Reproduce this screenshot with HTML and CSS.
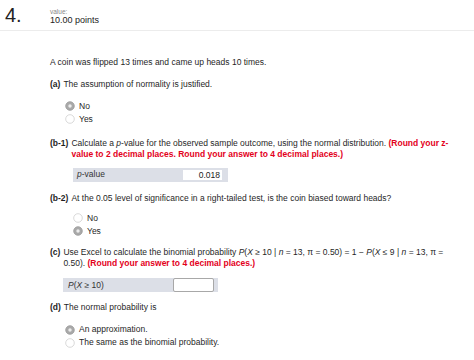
FILE: index.html
```html
<!DOCTYPE html>
<html>
<head>
<meta charset="utf-8">
<link rel="stylesheet" href="styles.css">
</head>
<body>
<div class="header">
  <div class="qnum">4.</div>
  <div class="value">
    <div class="value-label">value:</div>
    <div class="points">10.00 points</div>
  </div>
</div>
<div class="content">
  <p class="intro">A coin was flipped 13 times and came up heads 10 times.</p>

  <div class="part part-a"><span class="tag">(a)</span><span class="txt">The assumption of normality is justified.</span></div>
  <div class="radios r-a">
    <div class="radio"><svg class="rb" width="10" height="10" viewBox="0 0 10 10"><circle cx="5" cy="5" r="4.3" fill="#a9a9a9" stroke="#9a9a9a" stroke-width="0.8"/><circle cx="5" cy="5" r="1.7" fill="#ececec"/></svg><span>No</span></div>
    <div class="radio"><svg class="rb" width="10" height="10" viewBox="0 0 10 10"><circle cx="5" cy="5" r="4.3" fill="#fff" stroke="#cfcfcf" stroke-width="0.8"/></svg><span>Yes</span></div>
  </div>

  <div class="part part-b1"><span class="tag">(b-1)</span><span class="txt">Calculate a <i>p</i>-value for the observed sample outcome, using the normal distribution. <b class="red">(Round your z-value to 2 decimal places. Round your answer to 4 decimal places.)</b></span></div>
  <div class="answer ans-b1">
    <div class="alabel"><i>p</i>-value</div>
    <div class="ainput filled">0.018</div>
  </div>

  <div class="part part-b2"><span class="tag">(b-2)</span><span class="txt">At the 0.05 level of significance in a right-tailed test, is the coin biased toward heads?</span></div>
  <div class="radios r-b2">
    <div class="radio"><svg class="rb" width="10" height="10" viewBox="0 0 10 10"><circle cx="5" cy="5" r="4.3" fill="#fff" stroke="#cfcfcf" stroke-width="0.8"/></svg><span>No</span></div>
    <div class="radio"><svg class="rb" width="10" height="10" viewBox="0 0 10 10"><circle cx="5" cy="5" r="4.3" fill="#a9a9a9" stroke="#9a9a9a" stroke-width="0.8"/><circle cx="5" cy="5" r="1.7" fill="#ececec"/></svg><span>Yes</span></div>
  </div>

  <div class="part part-c"><span class="tag">(c)</span><span class="txt">Use Excel to calculate the binomial probability <i>P</i>(<i>X</i> ≥ 10 | <i>n</i> = 13, π = 0.50) = 1 − <i>P</i>(<i>X</i> ≤ 9 | <i>n</i> = 13, π = 0.50). <b class="red">(Round your answer to 4 decimal places.)</b></span></div>
  <div class="answer ans-c">
    <div class="alabel"><i>P</i>(<i>X</i> ≥ 10)</div>
    <div class="ainput empty"></div>
  </div>

  <div class="part part-d"><span class="tag">(d)</span><span class="txt">The normal probability is</span></div>
  <div class="radios r-d">
    <div class="radio"><svg class="rb" width="10" height="10" viewBox="0 0 10 10"><circle cx="5" cy="5" r="4.3" fill="#a9a9a9" stroke="#9a9a9a" stroke-width="0.8"/><circle cx="5" cy="5" r="1.7" fill="#ececec"/></svg><span>An approximation.</span></div>
    <div class="radio"><svg class="rb" width="10" height="10" viewBox="0 0 10 10"><circle cx="5" cy="5" r="4.3" fill="#fff" stroke="#cfcfcf" stroke-width="0.8"/></svg><span>The same as the binomial probability.</span></div>
  </div>
</div>
</body>
</html>
```

FILE: styles.css
```css
html, body {
  margin: 0;
  padding: 0;
  background: #fff;
}
body {
  font-family: "Liberation Sans", Arial, sans-serif;
  color: #1f1f1f;
  width: 474px;
  height: 360px;
  overflow: hidden;
}
.header {
  display: flex;
  height: 30px;
  border-bottom: 1px solid #ececec;
}
.qnum {
  width: 45px;
  padding-left: 5px;
  font-size: 20px;
  line-height: 20px;
  padding-top: 5px;
  color: #222;
}
.value {
  padding-top: 8px;
}
.value-label {
  font-size: 6.5px;
  line-height: 7px;
  color: #888;
}
.points {
  font-size: 9px;
  line-height: 10px;
  color: #222;
}
.content {
  padding-left: 50px;
  padding-right: 20px;
  font-size: 8.5px;
  line-height: 11px;
}
.intro {
  margin: 26px 0 0 0;
}
.part {
  display: flex;
}
.tag {
  font-weight: bold;
  white-space: nowrap;
  margin-right: 3px;
}
.txt {
  flex: 1;
}
.red {
  color: #e3001b;
}
.part-a { margin-top: 11px; }
.part-b1 { margin-top: 12px; padding-right: 5px; }
.part-b2 { margin-top: 11px; }
.part-c { margin-top: 9px; }
.part-d { margin-top: 9.5px; }

.radios {
  display: flex;
  flex-direction: column;
}
.radio {
  display: flex;
  align-items: center;
  height: 13px;
}
.rb {
  margin-right: 4px;
  flex: none;
}
.r-a { margin-top: 9.5px; padding-left: 15px; }
.r-b2 { margin-top: 8px; padding-left: 23px; }
.r-d { margin-top: 10.5px; padding-left: 15px; }

.answer {
  display: flex;
  align-items: center;
  justify-content: space-between;
  background: #dcdfe7;
  width: 155px;
  box-sizing: border-box;
}
.ans-b1 {
  margin-top: 8.5px;
  margin-left: 23px;
  height: 13.5px;
  padding: 0 6px 0 4px;
}
.ans-c {
  margin-top: 9.5px;
  margin-left: 13px;
  height: 14px;
  padding: 0 4px 0 5px;
}
.alabel {
  color: #333;
}
.ainput {
  background: #fff;
  box-sizing: border-box;
}
.ainput.filled {
  width: 39px;
  height: 10px;
  line-height: 10px;
  text-align: right;
  padding-right: 2px;
  color: #222;
}
.ainput.empty {
  width: 41px;
  height: 14px;
  border: 1.5px solid #a8a8a8;
  border-radius: 2px;
}
```
